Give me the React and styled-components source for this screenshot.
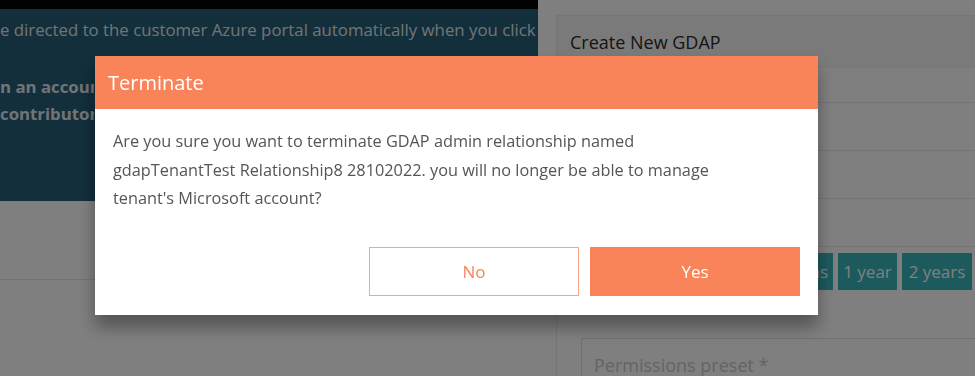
import React from "react";
import styled, { createGlobalStyle } from "styled-components";

const GlobalStyle = createGlobalStyle`
  html, body {
    margin: 0;
    padding: 0;
    background: #fff;
    font-family: "Open Sans", "Noto Sans", Arial, sans-serif;
  }
`;

const Page = styled.div`
  display: grid;
  grid-template-columns: 538px 1fr;
  height: 376px;
  overflow: hidden;
`;

const LeftCol = styled.div`
  display: flex;
  flex-direction: column;
  overflow: hidden;
`;

const TopStrip = styled.div`
  height: 9px;
  background: #050505;
`;

const InfoPanel = styled.div`
  height: 192px;
  background: #245e76;
  color: #e3e9ec;
  font-size: 16.8px;
  white-space: nowrap;
  overflow: hidden;
`;

const InfoLine = styled.p`
  margin: 0;
  margin-top: ${(p) => p.$top || 0}px;
  line-height: 27px;
  font-weight: ${(p) => (p.$bold ? 700 : 400)};
  max-width: ${(p) => (p.$clip ? `${p.$clip}px` : "none")};
  overflow: hidden;
`;

const LeftBody = styled.div`
  height: 78px;
  border-bottom: 1px solid #e6e6e6;
`;

const RightCol = styled.div`
  padding: 15px 0 0 18px;
  overflow: hidden;
`;

const Card = styled.div`
  border: 1px solid #ececec;
  border-right: none;
  height: 400px;
`;

const CardHeader = styled.div`
  height: 52px;
  background: #f5f5f5;
  color: #2a2a2a;
  font-size: 18px;
  line-height: 52px;
  padding-left: 13px;
`;

const FormRow = styled.div`
  height: ${(p) => p.$h}px;
  border-bottom: 1px solid #e8e8e8;
  box-sizing: border-box;
`;

const DurationRow = styled.div`
  display: flex;
  justify-content: flex-end;
  gap: 5px;
  padding: 6px 3px 0 0;
`;

const DurationButton = styled.button`
  height: 37px;
  width: ${(p) => p.$w}px;
  border: none;
  background: #38b4bc;
  color: #fff;
  font-family: inherit;
  font-size: 17px;
  padding: 0;
  white-space: nowrap;
  overflow: hidden;
`;

const PresetInput = styled.div`
  margin: 48px 0 0 24px;
  height: 60px;
  border: 1px solid #e2e2e2;
  border-right: none;
  color: #c8c8c8;
  font-size: 18px;
  padding: 14px 12px;
  box-sizing: border-box;
`;

const Overlay = styled.div`
  position: fixed;
  inset: 0;
  background: rgba(0, 0, 0, 0.5);
  padding: 56px 0 0 95px;
`;

const Modal = styled.div`
  width: 723px;
  background: #fff;
  box-shadow: 0 12px 16px rgba(0, 0, 0, 0.35);
`;

const ModalHeader = styled.div`
  height: 53px;
  background: #f9845a;
  color: #fff;
  font-size: 20px;
  line-height: 53px;
  padding-left: 13px;
`;

const ModalBody = styled.p`
  margin: 0;
  padding: 18px 18px 0 18px;
  color: #555;
  font-size: 16.3px;
  line-height: 28.5px;
`;

const ModalFooter = styled.div`
  display: flex;
  justify-content: flex-end;
  gap: 11px;
  padding: 34px 18px 19px;
`;

const ModalButton = styled.button`
  width: 210px;
  height: 49px;
  font-family: inherit;
  font-size: 17px;
  cursor: pointer;
  border: 1px solid ${(p) => (p.$primary ? "#f9845a" : "#fba385")};
  background: ${(p) => (p.$primary ? "#f9845a" : "#fff")};
  color: ${(p) => (p.$primary ? "#fff" : "#f9845a")};
  font-weight: ${(p) => (p.$primary ? 500 : 400)};
`;

const App = () => {
  return (
    <>
      <GlobalStyle />
      <Page>
        <LeftCol>
          <TopStrip />
          <InfoPanel>
            <InfoLine $top={7}>
              e directed to the customer Azure portal automatically when you click
            </InfoLine>
            <InfoLine $top={30} $bold $clip={94}>
              n an account
            </InfoLine>
            <InfoLine $bold $clip={94}>
              contributor p
            </InfoLine>
          </InfoPanel>
          <LeftBody />
        </LeftCol>
        <RightCol>
          <Card>
            <CardHeader>Create New GDAP</CardHeader>
            <FormRow $h={35} />
            <FormRow $h={48} />
            <FormRow $h={48} />
            <FormRow $h={48} />
            <DurationRow>
              <DurationButton $w={85}>6 months</DurationButton>
              <DurationButton $w={59}>1 year</DurationButton>
              <DurationButton $w={70}>2 years</DurationButton>
            </DurationRow>
            <PresetInput>Permissions preset *</PresetInput>
          </Card>
        </RightCol>
      </Page>
      <Overlay>
        <Modal>
          <ModalHeader>Terminate</ModalHeader>
          <ModalBody>
            Are you sure you want to terminate GDAP admin relationship named
            <br />
            gdapTenantTest Relationship8 28102022. you will no longer be able to
            manage
            <br />
            tenant's Microsoft account?
          </ModalBody>
          <ModalFooter>
            <ModalButton>No</ModalButton>
            <ModalButton $primary>Yes</ModalButton>
          </ModalFooter>
        </Modal>
      </Overlay>
    </>
  );
};

export default App;
